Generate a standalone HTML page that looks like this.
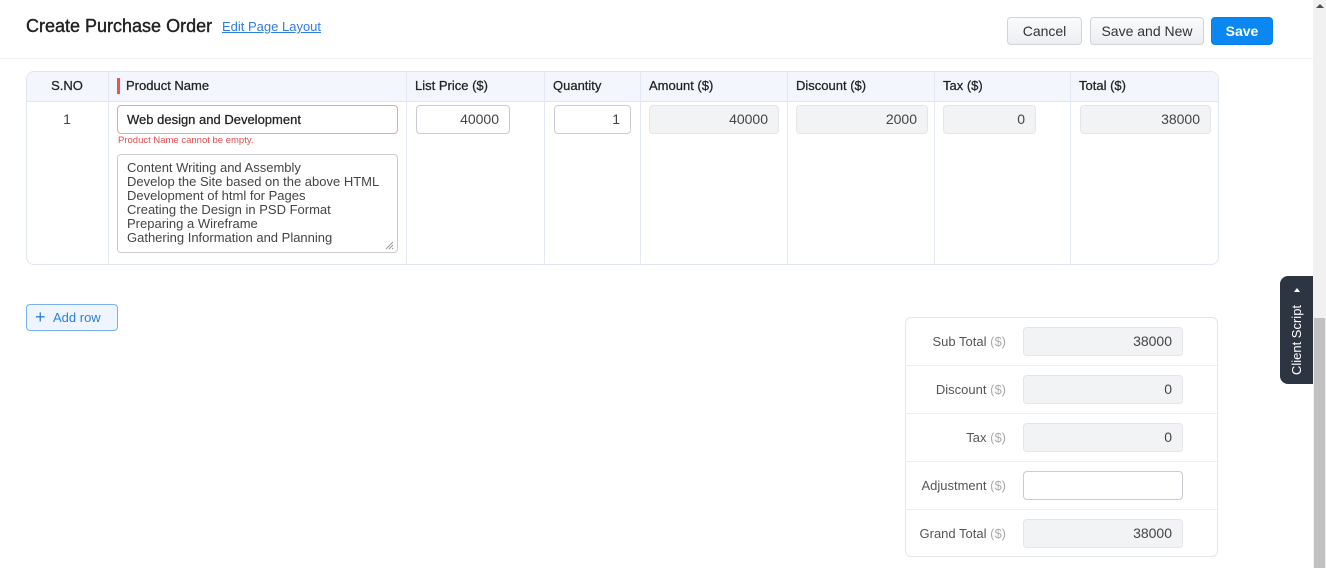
<!DOCTYPE html>
<html><head><style>
*{box-sizing:border-box;margin:0;padding:0}
body{width:1326px;height:568px;overflow:hidden;background:#fff;font-family:"Liberation Sans",sans-serif;color:#222;position:relative}
.a{position:absolute}
.btn{position:absolute;top:17px;height:28px;border:1px solid #cfd3da;border-radius:4px;background:linear-gradient(#fafbfc,#eceef2);font-size:14px;color:#333;text-align:center;line-height:26px}
.th{position:absolute;top:71px;height:30px;line-height:30px;font-size:13px;color:#222;padding-left:9px;-webkit-text-stroke:0.25px #222}
.vl{position:absolute;top:72px;height:192px;width:1px;background:#e3e9f2}
.in{position:absolute;height:29px;border:1px solid #c9ccd1;border-radius:4px;font-size:14px;text-align:right;padding-right:10px;line-height:27px;color:#444}
.ro{background:#f2f3f5;border-color:#e3e5e8}
.lbl{position:absolute;right:320px;font-size:13px;color:#555;text-align:right}
.lbl span{color:#aaa}
</style></head><body>
<div class="a" style="left:26px;top:16px;font-size:18px;color:#222;-webkit-text-stroke:0.4px #222">Create Purchase Order</div>
<div class="a" style="left:222px;top:19px;font-size:13px;color:#2f7de1;text-decoration:underline">Edit Page Layout</div>
<div class="btn" style="left:1007px;width:75px">Cancel</div>
<div class="btn" style="left:1090px;width:114px">Save and New</div>
<div class="btn" style="left:1211px;width:62px;background:#0a87f0;border-color:#0a7fe6;color:#fff;font-weight:bold">Save</div>
<div class="a" style="left:0;top:58px;width:1313px;height:1px;background:#f0f2f5"></div>

<div class="a" style="left:26px;top:71px;width:1193px;height:194px;border:1px solid #e0e6ee;border-radius:8px;overflow:hidden">
<div class="a" style="left:0;top:0;width:1193px;height:30px;background:#f3f7fd;border-bottom:1px solid #e0e6ee"></div>
</div>
<div class="vl" style="left:108px"></div><div class="vl" style="left:406px"></div><div class="vl" style="left:544px"></div><div class="vl" style="left:640px"></div><div class="vl" style="left:787px"></div><div class="vl" style="left:934px"></div><div class="vl" style="left:1070px"></div>
<div class="th" style="left:26px;width:82px;text-align:center;padding:0">S.NO</div>
<div class="a" style="left:117px;top:78px;width:3px;height:16px;background:#f05050"></div>
<div class="th" style="left:117px">Product Name</div>
<div class="th" style="left:406px">List Price ($)</div>
<div class="th" style="left:544px">Quantity</div>
<div class="th" style="left:640px">Amount ($)</div>
<div class="th" style="left:787px">Discount ($)</div>
<div class="th" style="left:934px">Tax ($)</div>
<div class="th" style="left:1070px">Total ($)</div>

<div class="a" style="left:26px;top:111px;width:82px;text-align:center;font-size:14px;color:#444">1</div>
<div class="in" style="left:117px;top:105px;width:281px;border-color:#f4a0a0;text-align:left;padding-left:9px;color:#222;font-size:13px;-webkit-text-stroke:0.25px #222">Web design and Development</div>
<div class="a" style="left:118px;top:135px;font-size:9.5px;color:#e84a4a">Product Name cannot be empty.</div>
<div class="in" style="left:117px;top:154px;width:281px;height:99px;text-align:left;padding:6px 9px;font-size:13px;line-height:14px;color:#444">Content Writing and Assembly<br>Develop the Site based on the above HTML<br>Development of html for Pages<br>Creating the Design in PSD Format<br>Preparing a Wireframe<br>Gathering Information and Planning</div>
<svg class="a" style="left:384px;top:240px" width="10" height="10"><path d="M9 2L2 9M9 5L5 9M9 8L8 9" stroke="#999" stroke-width="1"/></svg>
<div class="in" style="left:416px;top:105px;width:94px">40000</div>
<div class="in" style="left:554px;top:105px;width:77px">1</div>
<div class="in ro" style="left:649px;top:105px;width:130px">40000</div>
<div class="in ro" style="left:796px;top:105px;width:132px">2000</div>
<div class="in ro" style="left:943px;top:105px;width:93px">0</div>
<div class="in ro" style="left:1080px;top:105px;width:131px">38000</div>

<div class="a" style="left:26px;top:304px;width:92px;height:27px;border:1px solid #7ab0ee;border-radius:4px;background:#eef5fe;color:#2f7de1;font-size:13px;line-height:25px;padding-left:26px">Add row</div>
<div class="a" style="left:35px;top:310px;font-size:18px;line-height:14px;color:#2f7de1">+</div>

<div class="a" style="left:905px;top:317px;width:313px;height:240px;border:1px solid #e3e6ea;border-radius:6px"></div>
<div class="a" style="left:906px;top:365px;width:311px;height:1px;background:#eceef1"></div>
<div class="a" style="left:906px;top:413px;width:311px;height:1px;background:#eceef1"></div>
<div class="a" style="left:906px;top:461px;width:311px;height:1px;background:#eceef1"></div>
<div class="a" style="left:906px;top:509px;width:311px;height:1px;background:#eceef1"></div>
<div class="lbl" style="top:334px">Sub Total <span>($)</span></div>
<div class="lbl" style="top:382px">Discount <span>($)</span></div>
<div class="lbl" style="top:430px">Tax <span>($)</span></div>
<div class="lbl" style="top:478px">Adjustment <span>($)</span></div>
<div class="lbl" style="top:526px">Grand Total <span>($)</span></div>
<div class="in ro" style="left:1023px;top:327px;width:160px">38000</div>
<div class="in ro" style="left:1023px;top:375px;width:160px">0</div>
<div class="in ro" style="left:1023px;top:423px;width:160px">0</div>
<div class="in" style="left:1023px;top:471px;width:160px"></div>
<div class="in ro" style="left:1023px;top:519px;width:160px">38000</div>

<div class="a" style="left:1280px;top:276px;width:33px;height:108px;background:#2e3542;border-radius:8px 0 0 8px"></div>
<div class="a" style="left:1257px;top:330px;width:80px;height:20px;transform:rotate(-90deg);color:#fff;font-size:13px;text-align:center;line-height:20px">Client Script</div>
<div class="a" style="left:1294px;top:288px;width:0;height:0;border-left:3px solid transparent;border-right:3px solid transparent;border-bottom:4px solid #fff"></div>

<div class="a" style="left:1313px;top:0;width:13px;height:568px;background:#f1f1f1"></div>
<div class="a" style="left:1314px;top:318px;width:11px;height:250px;background:#c1c1c1"></div>
<div class="a" style="left:1316px;top:4px;width:0;height:0;border-left:4px solid transparent;border-right:4px solid transparent;border-bottom:4px solid #505050"></div>
</body></html>
